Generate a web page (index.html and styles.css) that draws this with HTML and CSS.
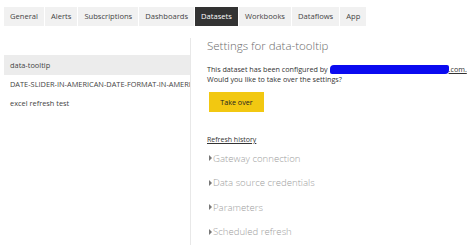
FILE: index.html
```
<!DOCTYPE html>
<html lang="en">
<head>
    <meta charset="UTF-8">
    <title>Settings</title>
    <link rel="stylesheet" href="styles.css">
</head>
<body>
    <div class="tabs">
        <div class="tab">General</div>
        <div class="tab">Alerts</div>
        <div class="tab">Subscriptions</div>
        <div class="tab">Dashboards</div>
        <div class="tab active">Datasets</div>
        <div class="tab">Workbooks</div>
        <div class="tab">Dataflows</div>
        <div class="tab">App</div>
    </div>

    <div class="main">
        <div class="list">
            <div class="list-item selected">data-tooltip</div>
            <div class="list-item">DATE-SLIDER-IN-AMERICAN-DATE-FORMAT-IN-AMERICAN</div>
            <div class="list-item">excel refresh test</div>
        </div>

        <div class="settings">
            <h1 class="title">Settings for data-tooltip</h1>
            <p class="notice">
                This dataset has been configured by <span class="redacted"></span><a class="owner">.com.</a><br>
                Would you like to take over the settings?
            </p>
            <button class="take-over">Take over</button>

            <a class="history">Refresh history</a>

            <div class="section"><span class="caret"></span>Gateway connection</div>
            <div class="section"><span class="caret"></span>Data source credentials</div>
            <div class="section"><span class="caret"></span>Parameters</div>
            <div class="section"><span class="caret"></span>Scheduled refresh</div>
        </div>
    </div>
</body>
</html>
```

FILE: styles.css
```
body {
    margin: 0;
    background: #fff;
    font-family: 'Open Sans', sans-serif;
    color: #333;
    width: 474px;
    height: 245px;
    overflow: hidden;
}

.tabs {
    display: flex;
    gap: 1px;
    margin: 7px 0 0 4px;
}

.tab {
    height: 19px;
    line-height: 19px;
    padding: 0 6px;
    font-size: 7.6px;
    color: #444;
    background: #f1f1f1;
}

.tab.active {
    background: #333;
    color: #fff;
}

.main {
    display: flex;
    height: 207px;
    margin-top: 12px;
    overflow: hidden;
}

.list {
    box-sizing: border-box;
    width: 187px;
    margin-left: 4px;
    padding-top: 17px;
    border-right: 1px solid #e8e8e8;
}

.list-item {
    height: 19px;
    line-height: 19px;
    padding-left: 6px;
    font-size: 7.4px;
    color: #444;
    white-space: nowrap;
    overflow: hidden;
}

.list-item.selected {
    height: 20px;
    line-height: 20px;
    background: #ececec;
}

.settings {
    padding-left: 16px;
}

.title {
    margin: 0;
    font-size: 11.5px;
    font-weight: 300;
    color: #6a6a6a;
    line-height: 15px;
}

.notice {
    margin: 12px 0 0;
    font-size: 7.2px;
    line-height: 9.5px;
    color: #333;
}

.redacted {
    display: inline-block;
    width: 119px;
    height: 9px;
    vertical-align: -2px;
    background: #0a0af0;
    border-radius: 4px 2px 4px 2px;
}

.owner {
    text-decoration: underline;
    color: #333;
}

.take-over {
    display: block;
    margin: 8px 0 0 2px;
    width: 55px;
    height: 20px;
    padding: 0;
    border: none;
    background: #f2c811;
    font-family: 'Open Sans', sans-serif;
    font-size: 7.2px;
    color: #222;
}

.history {
    display: block;
    margin: 23px 0 2px;
    font-size: 7px;
    color: #333;
    text-decoration: underline;
}

.section {
    display: flex;
    align-items: center;
    height: 24.5px;
    font-size: 9.6px;
    color: #a0a0a0;
    font-weight: 300;
}

.caret {
    width: 0;
    height: 0;
    margin: 0 1px 0 2px;
    border-top: 3px solid transparent;
    border-bottom: 3px solid transparent;
    border-left: 3px solid #777;
}
```
